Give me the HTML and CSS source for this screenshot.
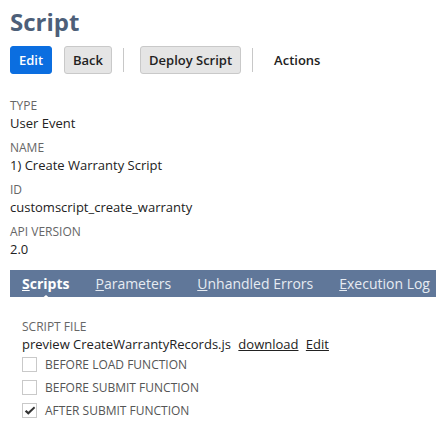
FILE: index.html
```html
<!DOCTYPE html>
<html>
<head>
<meta charset="utf-8">
<link rel="stylesheet" href="styles.css">
</head>
<body>
<div class="page">
  <h1 class="title">Script</h1>
  <div class="toolbar">
    <button class="btn btn-primary">Edit</button>
    <button class="btn">Back</button>
    <span class="sep"></span>
    <button class="btn">Deploy Script</button>
    <span class="sep"></span>
    <span class="actions">Actions</span>
  </div>
  <div class="fields">
    <div class="field"><div class="label">TYPE</div><div class="value">User Event</div></div>
    <div class="field"><div class="label">NAME</div><div class="value">1) Create Warranty Script</div></div>
    <div class="field"><div class="label">ID</div><div class="value">customscript_create_warranty</div></div>
    <div class="field"><div class="label">API VERSION</div><div class="value">2.0</div></div>
  </div>
  <div class="tabs">
    <span class="tab active"><u>S</u>cripts</span>
    <span class="tab"><u>P</u>arameters</span>
    <span class="tab"><u>U</u>nhandled Errors</span>
    <span class="tab"><u>E</u>xecution Log</span>
  </div>
  <div class="panel">
    <div class="label">SCRIPT FILE</div>
    <div class="value file">preview CreateWarrantyRecords.js <a class="link">download</a> <a class="link">Edit</a></div>
    <div class="check"><span class="box"></span><span class="clabel">BEFORE LOAD FUNCTION</span></div>
    <div class="check"><span class="box"></span><span class="clabel">BEFORE SUBMIT FUNCTION</span></div>
    <div class="check"><span class="box"><svg width="12" height="10" viewBox="0 0 12 10"><path d="M0.8 5.4 L2.4 3.9 L4.3 5.8 L10 0.6 L11.2 1.9 L4.3 8.8 Z" fill="#333"/></svg></span><span class="clabel">AFTER SUBMIT FUNCTION</span></div>
  </div>
</div>
</body>
</html>
```
FILE: styles.css
```css
* { box-sizing: border-box; }
html, body { margin: 0; padding: 0; background: #fff; }
body { font-family: "Open Sans", sans-serif; color: #333; }
.page { padding: 0 3px 0 10px; }
.title {
  margin: 0;
  padding-top: 5px;
  font-size: 24px;
  line-height: 34px;
  font-weight: 700;
  color: #4d5f79;
}
.toolbar {
  display: flex;
  align-items: center;
  height: 28px;
  margin-top: 7px;
}
.btn {
  font-family: "Open Sans", sans-serif;
  font-size: 13px;
  font-weight: 600;
  height: 28px;
  padding: 0 8px;
  border: 1px solid #c9c9c9;
  border-radius: 3px;
  background: #e5e5e5;
  color: #222;
  margin-right: 11px;
}
.btn-primary {
  background: #0b6ee0;
  border-color: #0b6ee0;
  color: #fff;
  width: 42px;
  margin-right: 12px;
}
.sep {
  width: 1px;
  height: 24px;
  background: #c8c8c8;
  margin-right: 16px;
}
.actions {
  font-size: 13px;
  font-weight: 600;
  color: #222;
  padding-left: 5px;
}
.fields { margin-top: 25px; }
.field { margin-bottom: 7px; }
.label {
  font-size: 12px;
  line-height: 14px;
  color: #666;
  text-transform: uppercase;
}
.value {
  font-size: 13px;
  line-height: 21px;
  color: #222;
}
.tabs {
  display: flex;
  align-items: center;
  background: #607799;
  height: 27px;
  margin-top: 10px;
  padding-left: 12px;
  position: relative;
}
.tab {
  font-size: 14px;
  color: #e6ebf2;
  margin-right: 26px;
  white-space: nowrap;
}
.tab.active {
  font-weight: 700;
  color: #fff;
  position: relative;
}
.tab.active::after {
  content: "";
  position: absolute;
  left: 50%;
  bottom: -7px;
  margin-left: -6px;
  border-left: 6px solid transparent;
  border-right: 6px solid transparent;
  border-bottom: 5px solid #fff;
}
.panel { padding: 23px 0 0 12px; }
.file { margin-bottom: -2px; }
.link { color: #222; text-decoration: underline; margin-left: 4px; }
.check {
  display: flex;
  align-items: center;
  height: 23px;
}
.box {
  width: 15px;
  height: 15px;
  border: 1px solid #c9c9c9;
  background: #fff;
  margin-right: 8px;
  display: flex;
  align-items: center;
  justify-content: center;
}
.clabel {
  font-size: 12px;
  color: #555;
}
```
